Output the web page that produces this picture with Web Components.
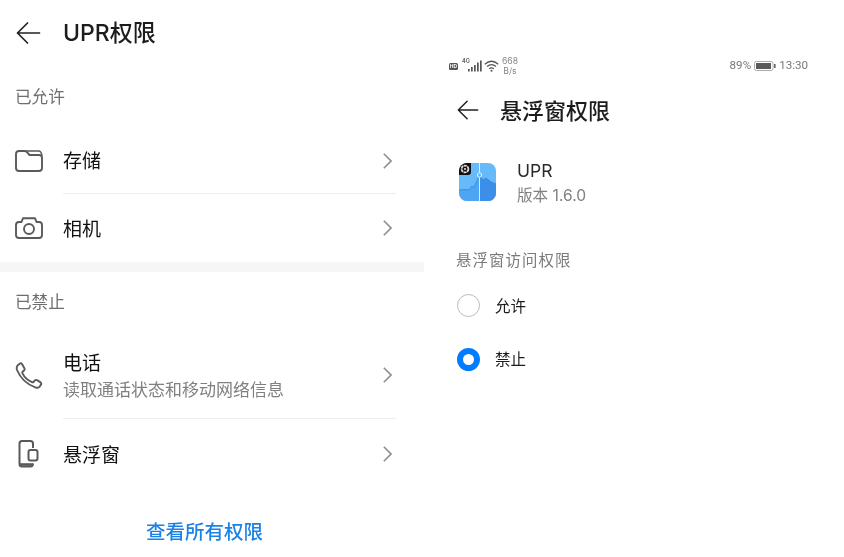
<!DOCTYPE html>
<html lang="zh"><head><meta charset="utf-8"><title>UPR</title>
<style>
html,body{margin:0;padding:0;background:#fff;width:844px;height:557px;overflow:hidden}
body{font-family:Inter,"Noto Sans CJK SC",sans-serif;color:#222;display:flex}
</style></head><body>
<perm-panel>
  <page-header title-text="UPR权限" size="23" h="66" pad="16" gap="22"></page-header>
  <section-label h="62">已允许</section-label>
  <perm-row icon="folder" h="65" label="存储" divider></perm-row>
  <perm-row icon="camera" h="68" label="相机"></perm-row>
  <band-gap></band-gap>
  <section-label h="60">已禁止</section-label>
  <perm-row icon="phone" h="86" label="电话" sub="读取通话状态和移动网络信息" divider></perm-row>
  <perm-row icon="float" h="70" label="悬浮窗"></perm-row>
  <all-link>查看所有权限</all-link>
</perm-panel>
<float-panel>
  <status-bar></status-bar>
  <page-header title-text="悬浮窗权限" size="22" h="66" pad="33" gap="21" ></page-header>
  <app-info></app-info>
  <radio-label>悬浮窗访问权限</radio-label>
  <radio-row label="允许"></radio-row>
  <radio-row label="禁止" checked></radio-row>
</float-panel>
<script>
const F='Inter,"Noto Sans CJK SC",sans-serif';
const IC={
folder:`<svg width="28" height="22" viewBox="0 0 28 22" fill="none" stroke="#5a5a5a" stroke-width="1.9" stroke-linejoin="round"><path d="M1 4Q1 1 4 1H9.5Q11 1 12 2.2L14.5 5H24Q27 5 27 8V18Q27 21 24 21H4Q1 21 1 18Z"/><path d="M10 1H23.5Q26.5 1 27 6" stroke-width="1.5"/></svg>`,
camera:`<svg width="28" height="22" viewBox="0 0 28 22" fill="none" stroke="#5a5a5a" stroke-width="1.9" stroke-linejoin="round"><path d="M4 5H6.5L8 1.2H20L21.5 5H24Q27 5 27 8V18Q27 21 24 21H4Q1 21 1 18V8Q1 5 4 5Z"/><circle cx="14" cy="12" r="5"/></svg>`,
phone:`<svg width="28" height="27" viewBox="0 0 28 27" fill="none" stroke="#5a5a5a" stroke-width="1.9" stroke-linejoin="round"><path d="M2.5 3.5L5 1.5Q6.2 .8 7 2L9.5 6.5Q10 7.7 9 8.5L7.5 9.8Q7 10.4 7.5 11.4Q10.5 17.5 17 20.2Q18 20.6 18.7 19.8L19.8 18.4Q20.7 17.5 22 18.1L25.6 20.4Q26.8 21.3 26 22.7L24.4 24.8Q23 26.2 20.8 25.6Q7.5 21 2 8Q1.2 5.2 2.5 3.5Z"/></svg>`,
float:`<svg width="28" height="28" viewBox="0 0 28 28" fill="none" stroke="#5a5a5a" stroke-width="2" stroke-linejoin="round"><path d="M18 8V3.5Q18 1 15.5 1H7Q4.5 1 4.5 3.5V24Q4.5 26.5 7 26.5H15.5Q18 26.5 18 23.5"/><path d="M5 24.5H18" stroke-width="2.6"/><rect x="13.5" y="10" width="9" height="10.5" rx="2"/></svg>`};
const def=(n,c)=>customElements.define(n,c);
const tpl=(el,html)=>{el.attachShadow({mode:'open'}).innerHTML=html};
const ARROW=`<svg width="25" height="22" viewBox="0 0 25 22" fill="none" stroke="#222" stroke-width="1.7" stroke-linecap="round" stroke-linejoin="round"><path d="M23.5 11H1.5M11.5 1L1.5 11L11.5 21"/></svg>`;
def('perm-panel',class extends HTMLElement{connectedCallback(){tpl(this,`<style>:host{display:flex;flex-direction:column;width:424px;height:557px;flex:none;filter:blur(.45px)}</style><slot></slot>`)}});
def('float-panel',class extends HTMLElement{connectedCallback(){tpl(this,`<style>:host{display:flex;flex-direction:column;width:420px;height:557px;flex:none;padding-top:55px;box-sizing:border-box;filter:blur(.45px)}</style><slot></slot>`)}});
def('page-header',class extends HTMLElement{connectedCallback(){const a=n=>this.getAttribute(n);const small=a('size')=='22';
tpl(this,`<style>:host{display:flex;align-items:center;height:${a('h')}px;padding-left:${a('pad')}px;gap:${a('gap')}px;flex:none}
h1{margin:0;padding-top:${small?2:0}px;font:500 ${a('size')}px/1 ${F};color:#1c1c1c}svg{flex:none}</style>${small?ARROW.replace('width="25" height="22"','width="22" height="20"'):ARROW}<h1>${a('title-text')}</h1>`)}});
def('section-label',class extends HTMLElement{connectedCallback(){tpl(this,`<style>:host{display:flex;align-items:center;height:${this.getAttribute('h')}px;padding-left:15px;font:400 16.6px/1 ${F};color:#6e6e6e;flex:none}</style><slot></slot>`)}});
def('perm-row',class extends HTMLElement{connectedCallback(){const a=n=>this.getAttribute(n);const sub=a('sub');
tpl(this,`<style>:host{display:block;flex:none}
.r{display:flex;align-items:center;height:${a('h')}px;padding-left:15px;padding-right:32px}
.i{width:48px;flex:none;display:flex;align-items:center}
.t{flex:1;min-width:0;padding-top:${sub?3:2}px}.l{font:400 19px/1 ${F};color:#111}
.s{font:400 17px/1 ${F};color:#808080;margin-top:9.5px}
.d{height:1px;background:#eee;margin:0 28px 0 63px}</style>
<div class="r"><span class="i">${IC[a('icon')]}</span><div class="t"><div class="l">${a('label')}</div>${sub?`<div class="s">${sub}</div>`:''}</div>
<svg width="9" height="16" viewBox="0 0 9 16" fill="none" stroke="#8e8e8e" stroke-width="1.6"><path d="M.8 .8L8 8L.8 15.2"/></svg></div>${this.hasAttribute('divider')?'<div class="d"></div>':''}`)}});
def('band-gap',class extends HTMLElement{connectedCallback(){tpl(this,`<style>:host{display:block;height:10px;background:#f6f6f6;flex:none}</style>`)}});
def('all-link',class extends HTMLElement{connectedCallback(){tpl(this,`<style>:host{display:flex;justify-content:center;padding:33px 15px 0 0;font:500 19.5px/20px ${F};color:#1b82e6;flex:none}</style><slot></slot>`)}});
def('status-bar',class extends HTMLElement{connectedCallback(){tpl(this,`<style>:host{display:flex;align-items:center;height:22px;padding:0 36px 0 25px;font:400 11.6px/1 Roboto,${F};color:#777;flex:none;gap:3px}
.hd{width:9px;height:7px;background:#555;border-radius:1.5px;color:#fff;font:700 5px/7px ${F};text-align:center;overflow:hidden}
.g{font:700 5.5px/1 ${F};color:#666;width:6px;margin:-8px 0 0 1px}
.sp{flex:1}.n{font:400 8.6px/10px ${F};color:#888;text-align:center}
.b{display:flex;align-items:center}</style>
<span class="hd">HD</span><span class="g">4G</span>
<svg width="14" height="12" viewBox="0 0 14 12" fill="#555" style="margin-left:-3px"><rect x="0" y="9" width="1.7" height="2.5"/><rect x="3" y="7" width="1.7" height="4.5"/><rect x="6" y="5" width="1.7" height="6.5"/><rect x="9" y="2.5" width="1.7" height="9"/><rect x="12" y=".5" width="1.7" height="11"/></svg>
<svg width="15" height="12" viewBox="0 0 15 12" fill="none" stroke="#555" stroke-width="1.3" style="margin-left:-1px"><path d="M.8 4.2Q7.5-1.6 14.2 4.2M3 6.6Q7.5 2.8 12 6.6M5.2 8.8Q7.5 7 9.8 8.8"/><circle cx="7.5" cy="10.8" r="1" fill="#555" stroke="none"/></svg>
<span class="n">668<br>B/s</span><span class="sp"></span>
<span>89%</span><span class="b"><svg width="22" height="10" viewBox="0 0 22 10"><rect x=".5" y=".5" width="18.5" height="9" rx="2" fill="none" stroke="#aaa"/><rect x="2" y="2" width="15" height="6" fill="#5a5a5a"/><rect x="20" y="3" width="1.6" height="4" fill="#666"/></svg></span><span>13:30</span>`)}});
def('app-info',class extends HTMLElement{connectedCallback(){tpl(this,`<style>:host{display:flex;align-items:center;gap:21px;padding:20px 0 0 35px;height:38px;flex:none}
.t{display:flex;flex-direction:column;gap:7px;padding-top:2px}.a{font:400 17.5px/18px ${F};color:#2a2a2a}.v{font:400 15.6px/18px ${F};color:#808080}</style>
<svg width="37" height="38" viewBox="0 0 37 38"><defs><clipPath id="c"><rect width="37" height="38" rx="8"/></clipPath></defs><g clip-path="url(#c)"><rect width="37" height="38" fill="#66baf9"/><path d="M0 27L6 26.5L10 27L13 23L15 24.5L20.5 12L24 17L27 15L32 19L37 21V38H0Z" fill="#4ea6f3"/><path d="M20.5 12L24 17L27 15L32 19L37 21V38H20.5Z" fill="#3b8fe8"/><path d="M0 27L6 26.5L10 27L13 23L15 24.5L20.5 12L24 17L27 15L32 19L37 21" fill="none" stroke="#2f86e4" stroke-width=".8"/><path d="M20.5 0V38" stroke="#d5ecfe" stroke-width="1"/><circle cx="20.5" cy="12" r="2.2" fill="#66baf9" stroke="#e6f4fe" stroke-width="1"/><path d="M0 0H12V9Q12 12 9 12H0Z" fill="#111"/><circle cx="6" cy="6" r="3.4" fill="none" stroke="#ddd" stroke-width="1.8" stroke-dasharray="3 .6"/><circle cx="6" cy="6" r=".9" fill="#fff"/></g></svg>
<div class="t"><span class="a">UPR</span><span class="v">版本 1.6.0</span></div>`)}});
def('radio-label',class extends HTMLElement{connectedCallback(){tpl(this,`<style>:host{display:block;padding:51px 0 0 32px;font:400 15.4px/18px ${F};letter-spacing:1.1px;color:#7a7a7a;flex:none;height:18px;margin-bottom:8px}</style><slot></slot>`)}});
def('radio-row',class extends HTMLElement{connectedCallback(){const c=this.hasAttribute('checked');tpl(this,`<style>:host{display:flex;align-items:center;height:54px;padding-left:33px;gap:15px;font:400 15.5px/1 ${F};color:#1c1c1c;flex:none}
span{padding-top:${c?2:4}px}
i{width:23px;height:23px;box-sizing:border-box;border-radius:50%;flex:none;border:${c?'6px solid #007dff':'1.4px solid #bbb'};background:#fff}</style><i></i><span>${this.getAttribute('label')}</span>`)}});
</script>
</body></html>
